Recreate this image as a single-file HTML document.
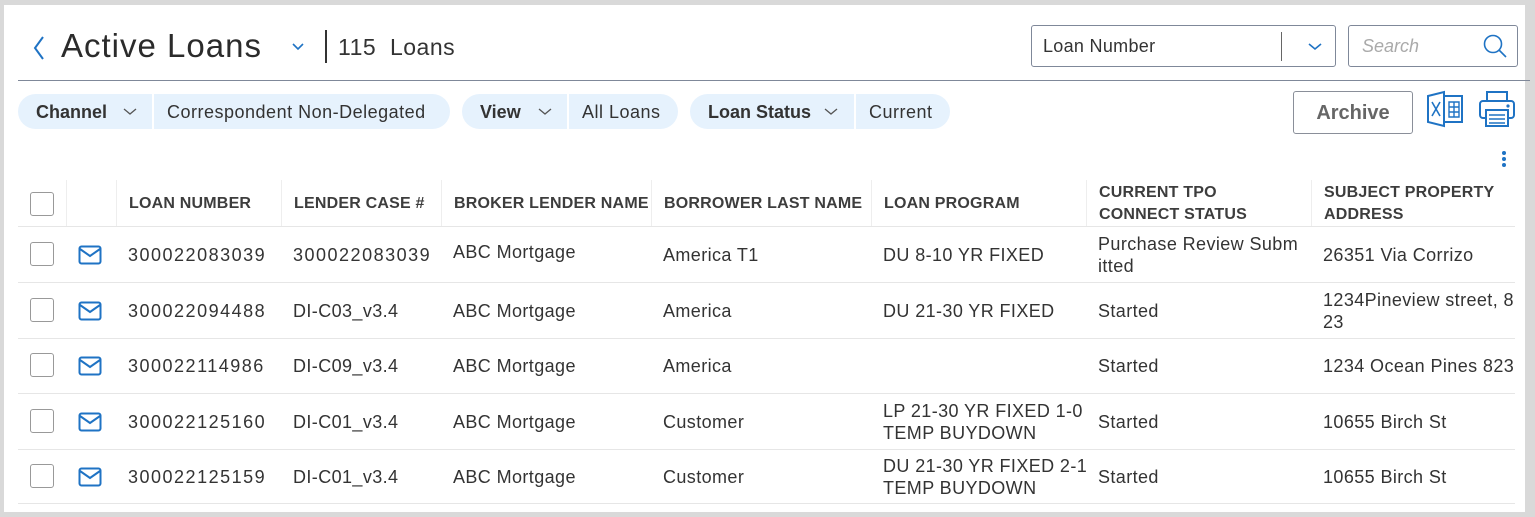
<!DOCTYPE html>
<html><head><meta charset="utf-8"><style>
*{box-sizing:border-box;margin:0;padding:0}
body{width:1535px;height:517px;background:#d9d9d9;font-family:"Liberation Sans",Arial,sans-serif;color:#333;position:relative;overflow:hidden}
.main{position:absolute;left:4px;top:5px;width:1521px;height:507px;background:#fff}
.a{position:absolute;white-space:nowrap}
.chip{position:absolute;top:94px;height:35px;background:#e6f2fd;font-size:18px;line-height:36px;letter-spacing:.5px;white-space:nowrap}
.hd{position:absolute;top:180px;height:47px;font-size:16px;font-weight:bold;color:#3d3d3d;display:flex;align-items:center;padding-left:12px;line-height:22px;border-left:1px solid #eee;letter-spacing:.2px;white-space:nowrap}
.row{position:absolute;left:18px;width:1497px;border-top:1px solid #e6e6e6}
.c{position:absolute;font-size:18px;line-height:22px;color:#333;letter-spacing:.4px;white-space:nowrap}
.n{letter-spacing:1.5px}
.cb{position:absolute;left:12px;width:24px;height:24px;border:1px solid #999;border-radius:3px;background:#fff}
</style></head><body>
<div class="main"></div>
<svg class="a" style="left:32px;top:35px" width="14" height="26"><path d="M11 2 L3 13 L11 24" fill="none" stroke="#1f73c4" stroke-width="2"/></svg>
<div class="a" style="left:61px;top:27px;font-size:33px;color:#2b2b2b;letter-spacing:1px">Active Loans</div>
<svg class="a" style="left:291px;top:42px" width="14" height="10"><path d="M2 2 L7 7 L12 2" fill="none" stroke="#1f73c4" stroke-width="1.6"/></svg>
<div class="a" style="left:325px;top:30px;width:2px;height:33px;background:#333"></div>
<div class="a" style="left:338px;top:34px;font-size:23px;color:#333;letter-spacing:.5px">115&nbsp; Loans</div>
<div class="a" style="left:1031px;top:25px;width:305px;height:42px;border:1px solid #7f8899;border-radius:3px"></div>
<div class="a" style="left:1043px;top:36px;font-size:18px;color:#333;letter-spacing:.3px">Loan Number</div>
<div class="a" style="left:1281px;top:32px;width:1px;height:29px;background:#666"></div>
<svg class="a" style="left:1307px;top:42px" width="16" height="10"><path d="M2 2 L8 7 L14 2" fill="none" stroke="#1f73c4" stroke-width="1.6"/></svg>
<div class="a" style="left:1348px;top:25px;width:170px;height:42px;border:1px solid #7f8899;border-radius:3px"></div>
<div class="a" style="left:1362px;top:36px;font-size:18px;color:#aaa;font-style:italic">Search</div>
<svg class="a" style="left:1482px;top:33px" width="26" height="26"><circle cx="11" cy="11" r="8.5" fill="none" stroke="#1f73c4" stroke-width="1.6"/><path d="M17 17 L24 24" stroke="#1f73c4" stroke-width="1.6"/></svg>
<div class="a" style="left:18px;top:80px;width:1512px;height:1px;background:#7f8899"></div>

<div class="chip" style="left:18px;width:134px;border-radius:18px 0 0 18px;padding-left:18px;font-weight:bold;letter-spacing:0">Channel</div>
<div class="chip" style="left:154px;width:296px;border-radius:0 18px 18px 0;padding-left:13px">Correspondent Non-Delegated</div>
<div class="chip" style="left:462px;width:105px;border-radius:18px 0 0 18px;padding-left:18px;font-weight:bold;letter-spacing:0">View</div>
<div class="chip" style="left:569px;width:109px;border-radius:0 18px 18px 0;padding-left:13px">All Loans</div>
<div class="chip" style="left:690px;width:164px;border-radius:18px 0 0 18px;padding-left:18px;font-weight:bold;letter-spacing:0">Loan Status</div>
<div class="chip" style="left:856px;width:94px;border-radius:0 18px 18px 0;padding-left:13px">Current</div>
<svg class="a" style="left:122px;top:107px" width="16" height="10"><path d="M2 2 L8 7 L14 2" fill="none" stroke="#555" stroke-width="1.3"/></svg>
<svg class="a" style="left:537px;top:107px" width="16" height="10"><path d="M2 2 L8 7 L14 2" fill="none" stroke="#555" stroke-width="1.3"/></svg>
<svg class="a" style="left:823px;top:107px" width="16" height="10"><path d="M2 2 L8 7 L14 2" fill="none" stroke="#555" stroke-width="1.3"/></svg>

<div class="a" style="left:1293px;top:91px;width:120px;height:43px;border:1px solid #8a8f99;border-radius:3px;font-size:20px;font-weight:bold;color:#666;text-align:center;line-height:43px">Archive</div>
<svg class="a" style="left:1426px;top:90px" width="40" height="38"><path d="M2 6 L18 2 L18 36 L2 32 Z" fill="#fff" stroke="#1f73c4" stroke-width="2"/><path d="M6 12 L14 26 M14 12 L6 26" stroke="#1f73c4" stroke-width="1.6"/><rect x="18" y="6" width="18" height="26" fill="none" stroke="#1f73c4" stroke-width="2"/><path d="M23 12 H33 V27 H23 Z M23 17 H33 M23 22 H33 M28 12 V27" fill="none" stroke="#1f73c4" stroke-width="1.4"/></svg>
<svg class="a" style="left:1478px;top:90px" width="38" height="38"><rect x="9" y="2" width="20" height="10" fill="none" stroke="#1f73c4" stroke-width="2"/><rect x="2" y="11" width="34" height="17" rx="3" fill="#fff" stroke="#1f73c4" stroke-width="2"/><circle cx="30" cy="16" r="1.6" fill="#1f73c4"/><rect x="8" y="20" width="22" height="16" fill="#fff" stroke="#1f73c4" stroke-width="2"/><path d="M11 25 H27 M11 29 H27 M11 33 H27" stroke="#1f73c4" stroke-width="1.4"/></svg>
<svg class="a" style="left:1501px;top:150px" width="6" height="18"><circle cx="3" cy="3" r="2" fill="#1f73c4"/><circle cx="3" cy="9" r="2" fill="#1f73c4"/><circle cx="3" cy="15" r="2" fill="#1f73c4"/></svg>

<div class="cb" style="left:30px;top:192px"></div>
<div class="hd" style="left:66px;width:50px"></div>
<div class="hd" style="left:116px;width:165px">LOAN NUMBER</div>
<div class="hd" style="left:281px;width:160px">LENDER CASE #</div>
<div class="hd" style="left:441px;width:210px">BROKER LENDER NAME</div>
<div class="hd" style="left:651px;width:220px">BORROWER LAST NAME</div>
<div class="hd" style="left:871px;width:215px">LOAN PROGRAM</div>
<div class="hd" style="left:1086px;width:225px">CURRENT TPO<br>CONNECT STATUS</div>
<div class="hd" style="left:1311px;width:204px">SUBJECT PROPERTY<br>ADDRESS</div>

<div class="row" style="top:226px;height:56px">
<div class="cb" style="top:15px"></div>
<svg class="a" style="left:60px;top:18px" width="24" height="20"><rect x="1.5" y="1.5" width="21" height="17" rx="2" fill="none" stroke="#1f73c4" stroke-width="2"/><path d="M2 4 L12 11 L22 4" fill="none" stroke="#1f73c4" stroke-width="2"/></svg>
<div class="c n" style="left:110px;top:17px">300022083039</div>
<div class="c n" style="left:275px;top:17px">300022083039</div>
<div class="c" style="left:435px;top:14px">ABC Mortgage</div>
<div class="c" style="left:645px;top:17px">America T1</div>
<div class="c" style="left:865px;top:17px">DU 8-10 YR FIXED</div>
<div class="c" style="left:1080px;top:6px">Purchase Review Subm<br>itted</div>
<div class="c" style="left:1305px;top:17px">26351 Via Corrizo</div>
</div>
<div class="row" style="top:282px;height:56px">
<div class="cb" style="top:15px"></div>
<svg class="a" style="left:60px;top:18px" width="24" height="20"><rect x="1.5" y="1.5" width="21" height="17" rx="2" fill="none" stroke="#1f73c4" stroke-width="2"/><path d="M2 4 L12 11 L22 4" fill="none" stroke="#1f73c4" stroke-width="2"/></svg>
<div class="c n" style="left:110px;top:17px">300022094488</div>
<div class="c" style="left:275px;top:17px">DI-C03_v3.4</div>
<div class="c" style="left:435px;top:17px">ABC Mortgage</div>
<div class="c" style="left:645px;top:17px">America</div>
<div class="c" style="left:865px;top:17px">DU 21-30 YR FIXED</div>
<div class="c" style="left:1080px;top:17px">Started</div>
<div class="c" style="left:1305px;top:6px">1234Pineview street, 8<br>23</div>
</div>
<div class="row" style="top:338px;height:55px">
<div class="cb" style="top:14px"></div>
<svg class="a" style="left:60px;top:17px" width="24" height="20"><rect x="1.5" y="1.5" width="21" height="17" rx="2" fill="none" stroke="#1f73c4" stroke-width="2"/><path d="M2 4 L12 11 L22 4" fill="none" stroke="#1f73c4" stroke-width="2"/></svg>
<div class="c n" style="left:110px;top:16px">300022114986</div>
<div class="c" style="left:275px;top:16px">DI-C09_v3.4</div>
<div class="c" style="left:435px;top:16px">ABC Mortgage</div>
<div class="c" style="left:645px;top:16px">America</div>
<div class="c" style="left:1080px;top:16px">Started</div>
<div class="c" style="left:1305px;top:16px">1234 Ocean Pines 823</div>
</div>
<div class="row" style="top:393px;height:56px">
<div class="cb" style="top:15px"></div>
<svg class="a" style="left:60px;top:18px" width="24" height="20"><rect x="1.5" y="1.5" width="21" height="17" rx="2" fill="none" stroke="#1f73c4" stroke-width="2"/><path d="M2 4 L12 11 L22 4" fill="none" stroke="#1f73c4" stroke-width="2"/></svg>
<div class="c n" style="left:110px;top:17px">300022125160</div>
<div class="c" style="left:275px;top:17px">DI-C01_v3.4</div>
<div class="c" style="left:435px;top:17px">ABC Mortgage</div>
<div class="c" style="left:645px;top:17px">Customer</div>
<div class="c" style="left:865px;top:6px">LP 21-30 YR FIXED 1-0<br>TEMP BUYDOWN</div>
<div class="c" style="left:1080px;top:17px">Started</div>
<div class="c" style="left:1305px;top:17px">10655 Birch St</div>
</div>
<div class="row" style="top:449px;height:55px;border-bottom:1px solid #e6e6e6">
<div class="cb" style="top:14px"></div>
<svg class="a" style="left:60px;top:17px" width="24" height="20"><rect x="1.5" y="1.5" width="21" height="17" rx="2" fill="none" stroke="#1f73c4" stroke-width="2"/><path d="M2 4 L12 11 L22 4" fill="none" stroke="#1f73c4" stroke-width="2"/></svg>
<div class="c n" style="left:110px;top:16px">300022125159</div>
<div class="c" style="left:275px;top:16px">DI-C01_v3.4</div>
<div class="c" style="left:435px;top:16px">ABC Mortgage</div>
<div class="c" style="left:645px;top:16px">Customer</div>
<div class="c" style="left:865px;top:5px">DU 21-30 YR FIXED 2-1<br>TEMP BUYDOWN</div>
<div class="c" style="left:1080px;top:16px">Started</div>
<div class="c" style="left:1305px;top:16px">10655 Birch St</div>
</div>
</body></html>
